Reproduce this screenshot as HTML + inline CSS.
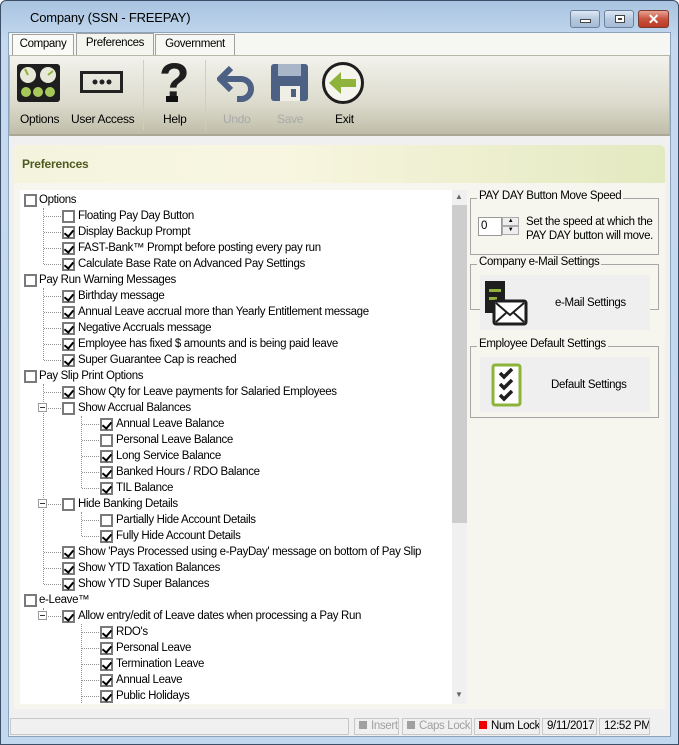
<!DOCTYPE html>
<html><head><meta charset="utf-8"><style>
*{box-sizing:border-box;margin:0;padding:0}
body{width:679px;height:745px;overflow:hidden;background:#fff;font-family:"Liberation Sans",sans-serif;font-size:11.5px;letter-spacing:-0.35px;color:#000;position:relative}
.abs{position:absolute}
#frame{left:0;top:0;width:679px;height:745px;background:linear-gradient(#a9c3e0,#c4d9ef 40px,#c2d8ee);border:1px solid #3c4f66;border-radius:6px 6px 0 0}
#client{left:8px;top:32px;width:663px;height:705px;background:#f0f0f0;border:1px solid #8da2bb}
.cb{position:absolute;width:13px;height:13px;border:2px solid #7a7a7a;background:#fff}
.cb.y::after{content:"";position:absolute;left:2px;top:0px;width:4px;height:7px;border:solid #000;border-width:0 2px 2px 0;transform:rotate(40deg)}
.t{position:absolute;white-space:nowrap;line-height:16px}
.hl{position:absolute;height:0;border-top:1px dotted #909090}
.vl{position:absolute;width:0;border-left:1px dotted #909090}
.ex{position:absolute;width:9px;height:9px;border:1px solid #999;background:#fff}
.ex::after{content:"";position:absolute;left:1px;top:3px;width:5px;height:1px;background:#333}
.tab{position:absolute;top:34px;height:21px;border:1px solid #a0a0a0;border-bottom:none;background:#f7f7f3;text-align:center;line-height:19px}
.lbl{position:absolute;top:112px;font-size:12px;letter-spacing:-0.3px}
.grp{position:absolute;border:1px solid #a6a6a6}
.grp span{position:absolute;top:-9px;left:6px;background:#f6f6ee;padding:0 2px;white-space:nowrap}
.stat{position:absolute;top:718px;height:17px;border:1px solid #c8c8c8;line-height:15px;padding-left:4px;white-space:nowrap;overflow:hidden}
.sq{display:inline-block;width:8px;height:8px;margin-right:4px;vertical-align:0px}
</style></head><body>
<div id="frame" class="abs"></div>
<div class="abs" style="left:30px;top:10px;font-size:13px;letter-spacing:-0.2px">Company (SSN - FREEPAY)</div>
<div class="abs" style="left:570px;top:10px;width:30px;height:18px;border:1px solid #6d819c;border-radius:3px;background:linear-gradient(#dde8f4,#b7c9df 50%,#a5bbd6)"><div class="abs" style="left:9px;top:8px;width:11px;height:4px;background:#fff;border:1px solid #444"></div></div>
<div class="abs" style="left:604px;top:10px;width:30px;height:18px;border:1px solid #6d819c;border-radius:3px;background:linear-gradient(#dde8f4,#b7c9df 50%,#a5bbd6)"><div class="abs" style="left:10px;top:4px;width:10px;height:8px;background:#fff;border:1px solid #444;box-shadow:inset 0 0 0 2px #fff,inset 0 0 0 3px #444"></div></div>
<div class="abs" style="left:638px;top:10px;width:31px;height:18px;border:1px solid #7b3a30;border-radius:3px;background:linear-gradient(#e9a495,#c9533f 50%,#b83a25);color:#fff;font-weight:bold;text-align:center;line-height:16px;font-size:14px">✕</div>
<div id="client" class="abs"></div>
<div class="abs" style="left:9px;top:33px;width:661px;height:22px;background:#f6f6f3"></div>
<div class="tab" style="left:12px;width:62px;background:#fafaf6">Company</div>
<div class="tab" style="left:76px;width:78px;top:33px;height:22px;background:#f5f5f0">Preferences</div>
<div class="tab" style="left:155px;width:80px">Government</div>
<div class="abs" style="left:9px;top:55px;width:661px;height:81px;background:linear-gradient(#f3f2ec,#dcdbcd 60%,#c0bea9);border:1px solid #b7b6a8;border-bottom:2px solid #a9a897"></div>
<div class="abs" style="left:143px;top:60px;width:1px;height:70px;background:#cfcec0"></div>
<div class="abs" style="left:205px;top:60px;width:1px;height:70px;background:#cfcec0"></div>
<svg class="abs" style="left:17px;top:63px" width="44" height="40" viewBox="0 0 44 40">
<rect x="0" y="1" width="43" height="38" rx="3" fill="#1e1e1e"/>
<circle cx="11" cy="12" r="8" fill="#e8e8d8"/><circle cx="31" cy="12" r="8" fill="#e8e8d8"/>
<line x1="11" y1="12" x2="8" y2="6" stroke="#8db33a" stroke-width="2"/><line x1="31" y1="12" x2="36" y2="8" stroke="#8db33a" stroke-width="2"/>
<circle cx="9" cy="29" r="5" fill="#a7c95a"/><circle cx="21" cy="29" r="5" fill="#a7c95a"/><circle cx="33" cy="29" r="5" fill="#a7c95a"/></svg>
<svg class="abs" style="left:80px;top:71px" width="44" height="22"><rect x="1.5" y="1.5" width="40" height="19" fill="none" stroke="#222" stroke-width="3"/><circle cx="15" cy="11" r="2.5" fill="#222"/><circle cx="22" cy="11" r="2.5" fill="#222"/><circle cx="29" cy="11" r="2.5" fill="#222"/></svg>
<div class="abs" style="left:159px;top:56px;font-size:50px;font-weight:bold;color:#1e1e1e;line-height:50px">?</div>
<div class="abs" style="left:166px;top:96px;width:12px;height:6px;background:#111"></div>
<svg class="abs" style="left:217px;top:64px" width="40" height="38"><path d="M14 4 L3 15 L14 26" fill="none" stroke="#4c6184" stroke-width="6"/><path d="M5 15 H24 A10 10 0 0 1 24 35 H20" fill="none" stroke="#4c6184" stroke-width="6"/></svg>
<svg class="abs" style="left:271px;top:64px" width="38" height="38"><rect x="0" y="0" width="37" height="37" rx="3" fill="#4c6184"/><rect x="7" y="0" width="23" height="12" fill="#a9b6c9"/><rect x="9" y="22" width="20" height="15" fill="#f0efe6"/><rect x="20" y="25" width="5" height="8" fill="#4c6184"/></svg>
<svg class="abs" style="left:321px;top:61px" width="44" height="44"><circle cx="22" cy="22" r="19.5" fill="#f5f5ee" stroke="#1e1e1e" stroke-width="3"/><path d="M8 22 L20 11 L20 18 L35 18 L35 26 L20 26 L20 33 Z" fill="#8db33a"/></svg>
<div class="lbl" style="left:20px">Options</div>
<div class="lbl" style="left:71px">User Access</div>
<div class="lbl" style="left:163px">Help</div>
<div class="lbl" style="left:223px;color:#a8a8a8">Undo</div>
<div class="lbl" style="left:277px;color:#a8a8a8">Save</div>
<div class="lbl" style="left:335px">Exit</div>
<div class="abs" style="left:14px;top:145px;width:651px;height:564px;background:#f6f6ee;border-radius:6px 6px 0 0"></div>
<div class="abs" style="left:14px;top:145px;width:651px;height:38px;background:linear-gradient(90deg,#f4f4de,#f8f6e0 40%,#e3e9c0);border-radius:6px 6px 0 0"></div>
<div class="abs" style="left:22px;top:157px;font-weight:bold;color:#4f5a1e;font-size:12px;letter-spacing:-0.2px">Preferences</div>
<div class="abs" style="left:20px;top:190px;width:447px;height:514px;background:#fff"></div>
<div class="abs" style="left:452px;top:190px;width:15px;height:514px;background:#f0f0f0"></div>
<div class="abs" style="left:452px;top:205px;width:15px;height:318px;background:#cdcdcd"></div>
<div class="abs" style="left:455px;top:192px;font-size:8px;color:#666">▲</div>
<div class="abs" style="left:455px;top:690px;font-size:8px;color:#666">▼</div>
<div class="vl" style="left:43px;top:208px;height:56px"></div>
<div class="vl" style="left:43px;top:288px;height:72px"></div>
<div class="vl" style="left:43px;top:384px;height:200px"></div>
<div class="vl" style="left:81px;top:416px;height:72px"></div>
<div class="vl" style="left:81px;top:512px;height:24px"></div>
<div class="vl" style="left:43px;top:608px;height:8px"></div>
<div class="vl" style="left:81px;top:624px;height:79px"></div>
<div class="cb" style="left:24px;top:194px"></div><div class="t" style="left:39px;top:192px">Options</div>
<div class="hl" style="left:44px;top:216px;width:17px"></div><div class="cb" style="left:62px;top:210px"></div><div class="t" style="left:78px;top:208px">Floating Pay Day Button</div>
<div class="hl" style="left:44px;top:232px;width:17px"></div><div class="cb y" style="left:62px;top:226px"></div><div class="t" style="left:78px;top:224px">Display Backup Prompt</div>
<div class="hl" style="left:44px;top:248px;width:17px"></div><div class="cb y" style="left:62px;top:242px"></div><div class="t" style="left:78px;top:240px">FAST-Bank™ Prompt before posting every pay run</div>
<div class="hl" style="left:44px;top:264px;width:17px"></div><div class="cb y" style="left:62px;top:258px"></div><div class="t" style="left:78px;top:256px">Calculate Base Rate on Advanced Pay Settings</div>
<div class="cb" style="left:24px;top:274px"></div><div class="t" style="left:39px;top:272px">Pay Run Warning Messages</div>
<div class="hl" style="left:44px;top:296px;width:17px"></div><div class="cb y" style="left:62px;top:290px"></div><div class="t" style="left:78px;top:288px">Birthday message</div>
<div class="hl" style="left:44px;top:312px;width:17px"></div><div class="cb y" style="left:62px;top:306px"></div><div class="t" style="left:78px;top:304px">Annual Leave accrual more than Yearly Entitlement message</div>
<div class="hl" style="left:44px;top:328px;width:17px"></div><div class="cb y" style="left:62px;top:322px"></div><div class="t" style="left:78px;top:320px">Negative Accruals message</div>
<div class="hl" style="left:44px;top:344px;width:17px"></div><div class="cb y" style="left:62px;top:338px"></div><div class="t" style="left:78px;top:336px">Employee has fixed $ amounts and is being paid leave</div>
<div class="hl" style="left:44px;top:360px;width:17px"></div><div class="cb y" style="left:62px;top:354px"></div><div class="t" style="left:78px;top:352px">Super Guarantee Cap is reached</div>
<div class="cb" style="left:24px;top:370px"></div><div class="t" style="left:39px;top:368px">Pay Slip Print Options</div>
<div class="hl" style="left:44px;top:392px;width:17px"></div><div class="cb y" style="left:62px;top:386px"></div><div class="t" style="left:78px;top:384px">Show Qty for Leave payments for Salaried Employees</div>
<div class="hl" style="left:44px;top:408px;width:17px"></div><div class="ex" style="left:38px;top:403px"></div><div class="cb" style="left:62px;top:402px"></div><div class="t" style="left:78px;top:400px">Show Accrual Balances</div>
<div class="hl" style="left:82px;top:424px;width:17px"></div><div class="cb y" style="left:100px;top:418px"></div><div class="t" style="left:116px;top:416px">Annual Leave Balance</div>
<div class="hl" style="left:82px;top:440px;width:17px"></div><div class="cb" style="left:100px;top:434px"></div><div class="t" style="left:116px;top:432px">Personal Leave Balance</div>
<div class="hl" style="left:82px;top:456px;width:17px"></div><div class="cb y" style="left:100px;top:450px"></div><div class="t" style="left:116px;top:448px">Long Service Balance</div>
<div class="hl" style="left:82px;top:472px;width:17px"></div><div class="cb y" style="left:100px;top:466px"></div><div class="t" style="left:116px;top:464px">Banked Hours / RDO Balance</div>
<div class="hl" style="left:82px;top:488px;width:17px"></div><div class="cb y" style="left:100px;top:482px"></div><div class="t" style="left:116px;top:480px">TIL Balance</div>
<div class="hl" style="left:44px;top:504px;width:17px"></div><div class="ex" style="left:38px;top:499px"></div><div class="cb" style="left:62px;top:498px"></div><div class="t" style="left:78px;top:496px">Hide Banking Details</div>
<div class="hl" style="left:82px;top:520px;width:17px"></div><div class="cb" style="left:100px;top:514px"></div><div class="t" style="left:116px;top:512px">Partially Hide Account Details</div>
<div class="hl" style="left:82px;top:536px;width:17px"></div><div class="cb y" style="left:100px;top:530px"></div><div class="t" style="left:116px;top:528px">Fully Hide Account Details</div>
<div class="hl" style="left:44px;top:552px;width:17px"></div><div class="cb y" style="left:62px;top:546px"></div><div class="t" style="left:78px;top:544px">Show 'Pays Processed using e-PayDay' message on bottom of Pay Slip</div>
<div class="hl" style="left:44px;top:568px;width:17px"></div><div class="cb y" style="left:62px;top:562px"></div><div class="t" style="left:78px;top:560px">Show YTD Taxation Balances</div>
<div class="hl" style="left:44px;top:584px;width:17px"></div><div class="cb y" style="left:62px;top:578px"></div><div class="t" style="left:78px;top:576px">Show YTD Super Balances</div>
<div class="cb" style="left:24px;top:594px"></div><div class="t" style="left:39px;top:592px">e-Leave™</div>
<div class="hl" style="left:44px;top:616px;width:17px"></div><div class="ex" style="left:38px;top:611px"></div><div class="cb y" style="left:62px;top:610px"></div><div class="t" style="left:78px;top:608px">Allow entry/edit of Leave dates when processing a Pay Run</div>
<div class="hl" style="left:82px;top:632px;width:17px"></div><div class="cb y" style="left:100px;top:626px"></div><div class="t" style="left:116px;top:624px">RDO's</div>
<div class="hl" style="left:82px;top:648px;width:17px"></div><div class="cb y" style="left:100px;top:642px"></div><div class="t" style="left:116px;top:640px">Personal Leave</div>
<div class="hl" style="left:82px;top:664px;width:17px"></div><div class="cb y" style="left:100px;top:658px"></div><div class="t" style="left:116px;top:656px">Termination Leave</div>
<div class="hl" style="left:82px;top:680px;width:17px"></div><div class="cb y" style="left:100px;top:674px"></div><div class="t" style="left:116px;top:672px">Annual Leave</div>
<div class="hl" style="left:82px;top:696px;width:17px"></div><div class="cb y" style="left:100px;top:690px"></div><div class="t" style="left:116px;top:688px">Public Holidays</div>
<div class="grp" style="left:470px;top:198px;width:189px;height:57px"><span>PAY DAY Button Move Speed</span></div>
<div class="abs" style="left:478px;top:217px;width:24px;height:19px;border:1px solid #999;background:#fff;padding-left:2px;line-height:17px">0</div>
<div class="abs" style="left:502px;top:217px;width:17px;height:9px;border:1px solid #aaa;background:#eee;font-size:6px;text-align:center;line-height:7px">▲</div>
<div class="abs" style="left:502px;top:226px;width:17px;height:9px;border:1px solid #aaa;background:#eee;font-size:6px;text-align:center;line-height:7px">▼</div>
<div class="abs" style="left:526px;top:215px;line-height:14px;white-space:nowrap">Set the speed at which the<br>PAY DAY button will move.</div>
<div class="grp" style="left:470px;top:264px;width:189px;height:46px"><span>Company e-Mail Settings</span></div>
<div class="abs" style="left:480px;top:275px;width:170px;height:55px;background:#efefef"></div>
<svg class="abs" style="left:484px;top:281px" width="44" height="45"><rect x="1" y="0" width="20" height="32" fill="#1e1e1e"/><rect x="5" y="8" width="12" height="3" fill="#8db33a"/><rect x="5" y="16" width="8" height="3" fill="#8db33a"/><rect x="10" y="20" width="32" height="23" rx="2" fill="#fff" stroke="#1e1e1e" stroke-width="3"/><path d="M12 22 L26 34 L40 22 M12 41 L22 32 M40 41 L30 32" fill="none" stroke="#1e1e1e" stroke-width="2"/></svg>
<div class="abs" style="left:555px;top:297px">e-Mail Settings</div>
<div class="grp" style="left:470px;top:346px;width:189px;height:72px"><span>Employee Default Settings</span></div>
<div class="abs" style="left:480px;top:357px;width:170px;height:55px;background:#efefef"></div>
<svg class="abs" style="left:491px;top:363px" width="32" height="44"><rect x="2" y="2" width="27" height="40" rx="2" fill="#fff" stroke="#8db33a" stroke-width="3"/><path d="M9 10 L13 14 L21 6 M9 21 L13 25 L21 17 M9 32 L13 36 L21 28" fill="none" stroke="#1e1e1e" stroke-width="3.5"/></svg>
<div class="abs" style="left:551px;top:379px">Default Settings</div>
<div class="stat" style="left:10px;width:339px"></div>
<div class="stat" style="left:354px;width:45px;color:#a0a0a0"><span class="sq" style="background:#a0a0a0"></span>Insert</div>
<div class="stat" style="left:402px;width:70px;color:#a0a0a0"><span class="sq" style="background:#a0a0a0"></span>Caps Lock</div>
<div class="stat" style="left:474px;width:66px"><span class="sq" style="background:#e00"></span>Num Lock</div>
<div class="stat" style="left:542px;width:55px">9/11/2017</div>
<div class="stat" style="left:599px;width:51px">12:52 PM</div>
</body></html>
